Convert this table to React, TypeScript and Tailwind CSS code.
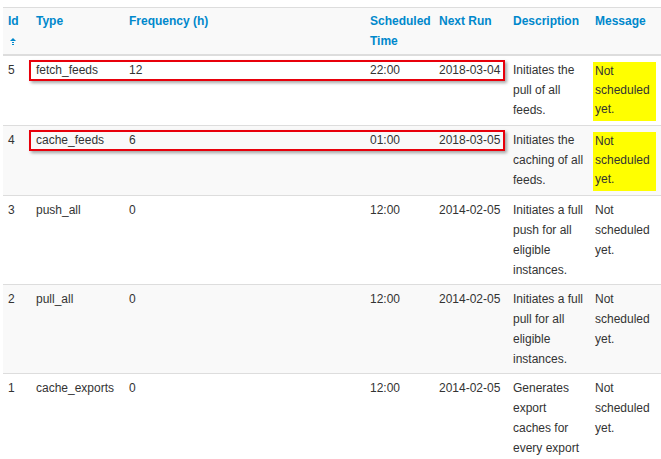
import React from "react";

type Job = {
  id: number;
  type: string;
  freq: string;
  time: string;
  next: string;
  desc: string;
  flagged: boolean;
};

const jobs: Job[] = [
  { id: 5, type: "fetch_feeds", freq: "12", time: "22:00", next: "2018-03-04", desc: "Initiates the pull of all feeds.", flagged: true },
  { id: 4, type: "cache_feeds", freq: "6", time: "01:00", next: "2018-03-05", desc: "Initiates the caching of all feeds.", flagged: true },
  { id: 3, type: "push_all", freq: "0", time: "12:00", next: "2014-02-05", desc: "Initiates a full push for all eligible instances.", flagged: false },
  { id: 2, type: "pull_all", freq: "0", time: "12:00", next: "2014-02-05", desc: "Initiates a full pull for all eligible instances.", flagged: false },
  { id: 1, type: "cache_exports", freq: "0", time: "12:00", next: "2014-02-05", desc: "Generates export caches for every export", flagged: false },
];

const SortIcon = () => (
  <svg width="6" height="8" viewBox="0 0 6 8" className="block mt-[7px] ml-[2px]">
    <path d="M3 0 L6 3 L0 3 Z" fill="#0088cc" />
    <rect x="2" y="4" width="2" height="1" fill="#0088cc" />
    <rect x="2" y="6" width="2" height="1" fill="#0088cc" />
  </svg>
);

const th = "px-[5px] pt-[3px] pb-[3px] text-left align-top font-bold text-[#0088cc]";
const td = "px-[5px] py-[4px] align-top";

export default function App() {
  return (
    <div className="bg-white h-[459px] w-[661px] overflow-hidden pt-[7px] pl-[3px] font-['Liberation_Sans',Arial,sans-serif] text-[12px] leading-[20px] text-[#333]">
      <table className="table-fixed border-collapse w-[658px]">
        <colgroup>
          <col className="w-[28px]" />
          <col className="w-[93px]" />
          <col className="w-[241px]" />
          <col className="w-[69px]" />
          <col className="w-[74px]" />
          <col className="w-[82px]" />
          <col />
        </colgroup>
        <thead>
          <tr className="bg-[#f9f9f9] border-t border-b-2 border-[#dddddd]">
            <th className={th}>
              Id
              <SortIcon />
            </th>
            <th className={th}>Type</th>
            <th className={th}>Frequency (h)</th>
            <th className={th}>Scheduled Time</th>
            <th className={th}>Next Run</th>
            <th className={th}>Description</th>
            <th className={th}>Message</th>
          </tr>
        </thead>
        <tbody>
          {jobs.map((job, i) => (
            <tr
              key={job.id}
              className={`border-b border-[#dddddd] ${i % 2 === 1 ? "bg-[#f9f9f9]" : "bg-white"}`}
            >
              <td className={td}>{job.id}</td>
              <td className={`${td} relative`}>
                {/* annotation box over Type..Next Run */}
                {job.flagged && (
                  <div className="absolute left-[-2px] top-[4px] h-[21px] w-[476px] border-2 border-[#e8000b] shadow-[2px_2px_3px_rgba(0,0,0,0.35)]" />
                )}
                {job.type}
              </td>
              <td className={td}>{job.freq}</td>
              <td className={td}>{job.time}</td>
              <td className={td}>{job.next}</td>
              <td className={td}>{job.desc}</td>
              <td className={td}>
                {job.flagged ? (
                  <div className="bg-[#ffff00] -ml-[2px] pl-[2px] mt-[2px] pb-[2px] leading-[19px]">Not scheduled yet.</div>
                ) : (
                  "Not scheduled yet."
                )}
              </td>
            </tr>
          ))}
        </tbody>
      </table>
    </div>
  );
}
